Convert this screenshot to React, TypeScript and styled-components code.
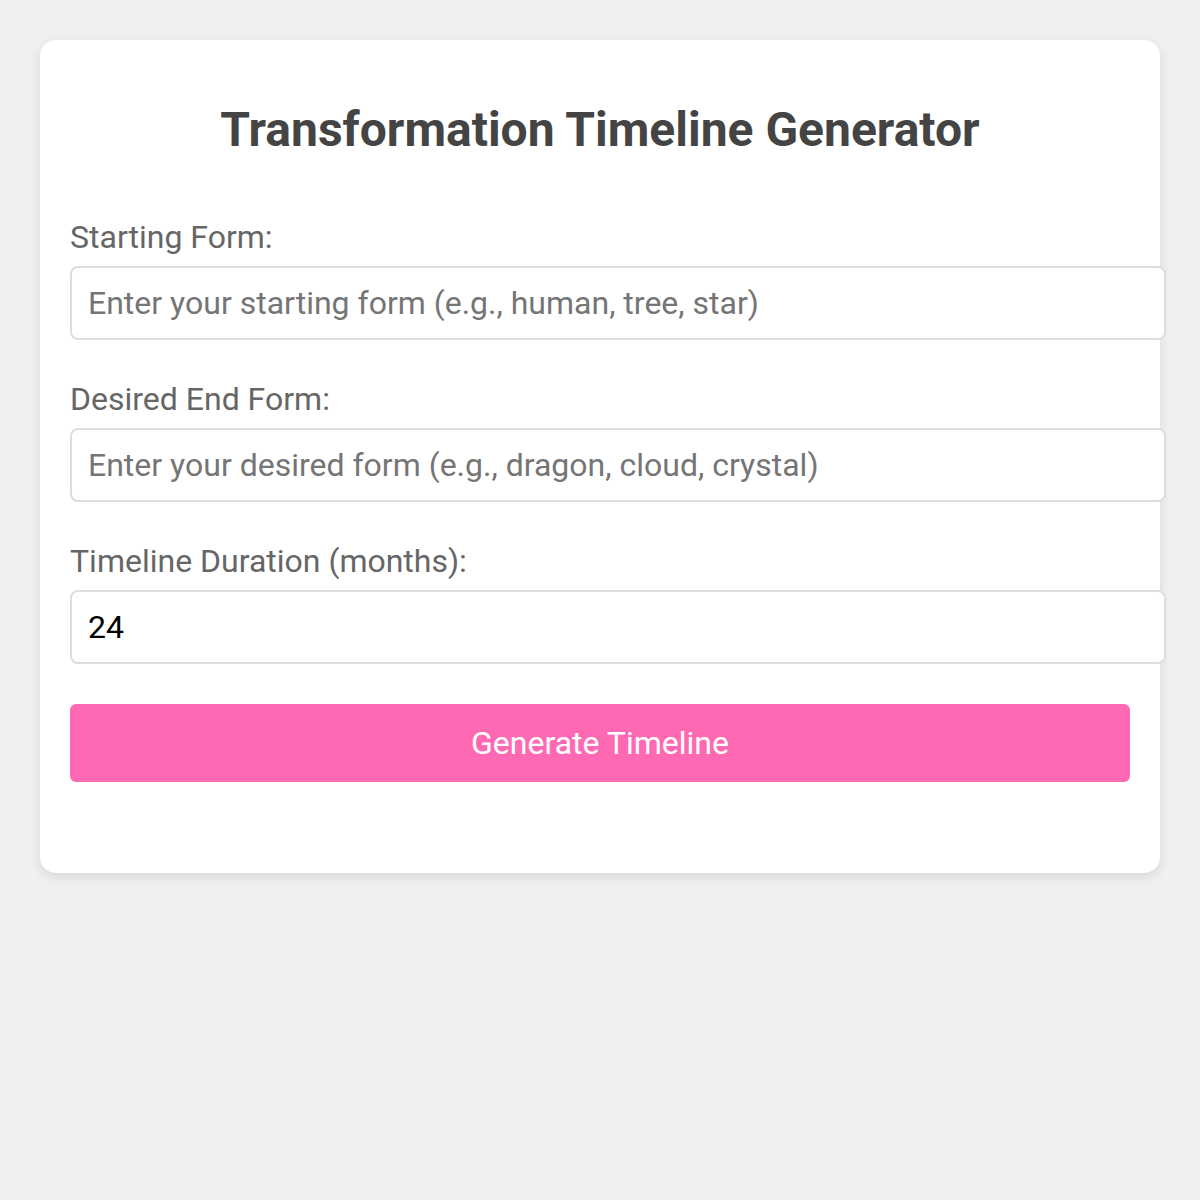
import { useState } from 'react'
import styled, { createGlobalStyle } from 'styled-components'

const GlobalStyle = createGlobalStyle`
  body {
    margin: 0;
    padding: 40px;
    background: #f0f0f0;
    font-family: Roboto, 'Liberation Sans', Arial, sans-serif;
  }
`

export default function App() {
  const [start, setStart] = useState('')
  const [end, setEnd] = useState('')
  const [months, setMonths] = useState('24')

  return (
    <>
      <GlobalStyle />
      <Card>
        <Title>Transformation Timeline Generator</Title>

        <Group>
          <Label htmlFor="start">Starting Form:</Label>
          <Input
            id="start"
            placeholder="Enter your starting form (e.g., human, tree, star)"
            value={start}
            onChange={event => setStart(event.target.value)}
          />
        </Group>

        <Group>
          <Label htmlFor="end">Desired End Form:</Label>
          <Input
            id="end"
            placeholder="Enter your desired form (e.g., dragon, cloud, crystal)"
            value={end}
            onChange={event => setEnd(event.target.value)}
          />
        </Group>

        <Group>
          <Label htmlFor="months">Timeline Duration (months):</Label>
          <Input
            id="months"
            type="text"
            value={months}
            onChange={event => setMonths(event.target.value)}
          />
        </Group>

        <GenerateButton>Generate Timeline</GenerateButton>

        <Results />
      </Card>
    </>
  )
}

const Card = styled.div`
  background: #fff;
  border-radius: 16px;
  padding: 30px;
  box-shadow: 0 4px 12px rgba(0, 0, 0, 0.1);
`

const Title = styled.h1`
  margin: 31px 0 60px;
  text-align: center;
  font-size: 48px;
  font-weight: 700;
  color: #444;
`

const Group = styled.div`
  margin-bottom: 40px;
`

const Label = styled.label`
  display: block;
  margin-bottom: 10px;
  font-size: 32px;
  color: #666;
`

const Input = styled.input`
  display: block;
  width: 100%;
  padding: 16px;
  border: 2px solid #ddd;
  border-radius: 8px;
  font-family: inherit;
  font-size: 32px;
  color: #000;
  outline: none;

  &::placeholder {
    color: #757575;
  }
`

const GenerateButton = styled.button`
  display: block;
  box-sizing: border-box;
  width: 100%;
  padding: 20px;
  border: none;
  border-radius: 6px;
  background: #ff69b4;
  color: #fff;
  font-family: inherit;
  font-size: 32px;
  cursor: pointer;
`

const Results = styled.div`
  margin-top: 61px;
`
